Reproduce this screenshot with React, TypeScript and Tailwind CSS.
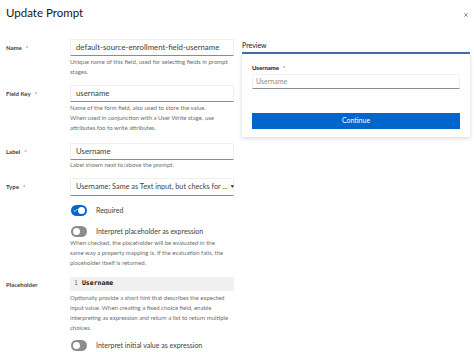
import { Check, X } from "lucide-react";

const font = { fontFamily: "Lato, 'Liberation Sans', sans-serif" };

function Req() {
  return <span className="ml-[4px] font-normal text-[#c9190b]">*</span>;
}

function Toggle({ on, label }: { on: boolean; label: string }) {
  return (
    <div className="flex h-[11px] items-center gap-[9px]">
      <span
        className={`relative flex h-[11px] w-[16px] shrink-0 items-center rounded-full ${
          on ? "bg-[#0066cc]" : "bg-[#8a8d90]"
        }`}
      >
        {on && <Check className="absolute left-[2px] h-[5px] w-[5px] text-white" strokeWidth={4} />}
        <span
          className={`absolute h-[7px] w-[7px] rounded-full bg-white ${on ? "right-[2px]" : "left-[2px]"}`}
        />
      </span>
      <span className="text-[7px] text-[#3c3f42]">{label}</span>
    </div>
  );
}

function TextInput({ value }: { value: string }) {
  return (
    <div className="flex h-[17px] items-center border border-[#f0f0f0] border-b-[#8a8d90] px-[5px] text-[7.8px] text-[#3c3f42]">
      {value}
    </div>
  );
}

// help text, one entry per rendered line
function Help({ lines }: { lines: string[] }) {
  return (
    <div className="text-[6px] leading-[10px] text-[#6a6e73]">
      {lines.map((l) => (
        <p key={l} className="whitespace-nowrap">
          {l}
        </p>
      ))}
    </div>
  );
}

function Row({
  label,
  required,
  children,
}: {
  label: string;
  required?: boolean;
  children: React.ReactNode;
}) {
  return (
    <div className="flex">
      <div className="flex h-[17px] w-[70px] shrink-0 items-center pl-[6px] text-[6px] font-bold text-[#3c3f42]">
        {label}
        {required && <Req />}
      </div>
      <div className="min-w-0 flex-1">{children}</div>
    </div>
  );
}

export default function App() {
  return (
    <div className="h-[352px] w-[474px] overflow-hidden bg-white" style={font}>
      <div className="flex h-[39px] items-start justify-between pl-[6px] pr-[5px] pt-[4px]">
        <h1 className="text-[11.5px] text-[#151515]">Update Prompt</h1>
        <X className="mt-[8px] h-[6px] w-[6px] text-[#6a6e73]" strokeWidth={3} />
      </div>
      <div className="flex gap-[8px] pr-[4px]">
        <div className="flex w-[234px] shrink-0 flex-col">
          <Row label="Name" required>
            <TextInput value="default-source-enrollment-field-username" />
            <div className="pt-[1px]">
              <Help
                lines={["Unique name of this field, used for selecting fields in prompt", "stages."]}
              />
            </div>
          </Row>
          <div className="mt-[8px]">
            <Row label="Field Key" required>
              <TextInput value="username" />
              <div className="pt-[1px]">
                <Help
                  lines={[
                    "Name of the form field, also used to store the value.",
                    "When used in conjunction with a User Write stage, use",
                    "attributes.foo to write attributes.",
                  ]}
                />
              </div>
            </Row>
          </div>
          <div className="mt-[10px]">
            <Row label="Label" required>
              <TextInput value="Username" />
              <Help lines={["Label shown next to/above the prompt."]} />
            </Row>
          </div>
          <div className="mt-[8px]">
            <Row label="Type" required>
              <div className="flex h-[18px] items-center justify-between border border-[#f0f0f0] border-b-[#8a8d90] px-[5px] text-[7.3px] text-[#3c3f42]">
                <span className="whitespace-nowrap">
                  Username: Same as Text input, but checks for ...
                </span>
                <span className="ml-[2px] text-[5px] text-[#151515]">▼</span>
              </div>
              <div className="mt-[9px] pl-[1px]">
                <Toggle on label="Required" />
              </div>
              <div className="mt-[10px] pl-[1px]">
                <Toggle on={false} label="Interpret placeholder as expression" />
              </div>
              <div className="pt-[1px]">
                <Help
                  lines={[
                    "When checked, the placeholder will be evaluated in the",
                    "same way a property mapping is. If the evaluation fails, the",
                    "placeholder itself is returned.",
                  ]}
                />
              </div>
            </Row>
          </div>
          <div className="mt-[9px]">
            <div className="flex">
              <div className="flex h-[14px] w-[70px] shrink-0 items-center pl-[6px] text-[6px] font-bold text-[#3c3f42]">
                Placeholder
              </div>
              <div className="min-w-0 flex-1">
                <div
                  className="flex h-[14px] items-center gap-[4px] bg-[#f0f0f0] px-[4px] text-[6.5px] font-bold text-[#151515]"
                  style={{ fontFamily: "'DejaVu Sans Mono', monospace" }}
                >
                  <span className="font-normal text-[#6a6e73]">1</span>
                  Username
                </div>
                <div className="pt-[2px]">
                  <Help
                    lines={[
                      "Optionally provide a short hint that describes the expected",
                      "input value. When creating a fixed choice field, enable",
                      "interpreting as expression and return a list to return multiple",
                      "choices.",
                    ]}
                  />
                </div>
                <div className="mt-[7px] pl-[1px]">
                  <Toggle on={false} label="Interpret initial value as expression" />
                </div>
              </div>
            </div>
          </div>
        </div>
        <div className="w-[228px] shrink-0">
          <div className="flex h-[13px] items-center text-[7px] text-[#151515]">Preview</div>
          <div className="h-[1.5px] bg-[#3f72af]" />
          <div className="bg-white px-[10px] pb-[8px] pt-[9px] shadow-[0_1px_4px_rgba(3,3,3,0.18)]">
            <div className="text-[6px] font-bold text-[#151515]">
              Username
              <Req />
            </div>
            <div className="mt-[2px] flex h-[15px] items-center border border-[#f0f0f0] border-b-[#8a8d90] px-[3px] text-[7px] text-[#8a8d90]">
              Username
            </div>
            <div className="mt-[24px] flex h-[16px] items-center justify-center bg-[#0066cc] text-[7px] text-white">
              Continue
            </div>
          </div>
        </div>
      </div>
    </div>
  );
}
